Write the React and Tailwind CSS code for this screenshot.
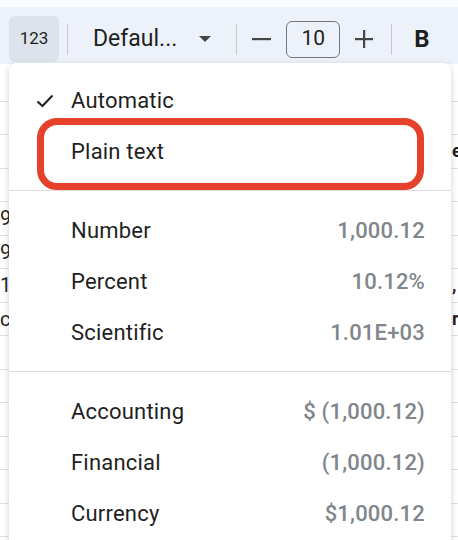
import React from 'react';

const font = { fontFamily: 'Roboto, "Noto Sans", sans-serif' };

const groups = [
  [
    { label: 'Automatic', checked: true },
    { label: 'Plain text', marked: true },
  ],
  [
    { label: 'Number', value: '1,000.12' },
    { label: 'Percent', value: '10.12%' },
    { label: 'Scientific', value: '1.01E+03' },
  ],
  [
    { label: 'Accounting', value: '$ (1,000.12)' },
    { label: 'Financial', value: '(1,000.12)' },
    { label: 'Currency', value: '$1,000.12' },
  ],
];

// sheet rows peeking out on both sides of the menu
const rows = [
  { left: '', right: '' },
  { left: '', right: '' },
  { left: '', right: 'e' },
  { left: '', right: '' },
  { left: '9', right: '' },
  { left: '9', right: '' },
  { left: '1', right: ',' },
  { left: 'c', right: 'r' },
  { left: '', right: '' },
  { left: '', right: '' },
  { left: '', right: '' },
  { left: '', right: '' },
  { left: '', right: '' },
  { left: '', right: '' },
];

const Sep = ({ className }) => <div className={`w-px h-[31px] bg-[#c7c7c7] ${className}`} />;

const Check = () => (
  <svg width="18" height="14" viewBox="0 0 18 14" fill="none">
    <path d="M1.5 7.5 L6.5 12 L16.5 1.5" stroke="#1f1f1f" strokeWidth="2" />
  </svg>
);

const MenuItem = ({ item }) => (
  <div className="relative h-[51px] flex items-center pl-[27px] pr-[26px]">
    <div className="w-[35px] flex items-center">{item.checked ? <Check /> : null}</div>
    <span className="text-[22px] text-[#1f1f1f] tracking-[0.2px]">{item.label}</span>
    {item.value ? (
      <span className="ml-auto text-[22px] font-medium text-[#80868b] tracking-[0.2px]">{item.value}</span>
    ) : null}
    {item.marked ? (
      <div className="absolute left-[28px] right-[27px] top-[-8px] bottom-[-13px] border-[7px] border-[#e5412b] rounded-[20px]" />
    ) : null}
  </div>
);

const App = () => {
  return (
    <div className="relative w-[458px] h-[540px] overflow-hidden bg-white" style={font}>
      <div className="h-[7px] bg-[#f9fbfd]" />
      <div className="h-[57px] bg-[#edf2fa] flex items-center pl-[9px] pt-[7px]">
        <div className="w-[50px] h-[46px] rounded-[6px] bg-[#dde3ea] flex items-center justify-center text-[17px] text-[#1f1f1f]">
          123
        </div>
        <Sep className="ml-[8px]" />
        <span className="ml-[25px] text-[23px] text-[#1f1f1f]">Defaul...</span>
        <svg className="ml-[22px]" width="12" height="6" viewBox="0 0 12 6">
          <path d="M0 0 L12 0 L6 6 Z" fill="#444746" />
        </svg>
        <Sep className="ml-[25px]" />
        <svg className="ml-[15px]" width="19" height="3" viewBox="0 0 19 3">
          <rect width="19" height="2.2" fill="#444746" />
        </svg>
        <div className="ml-[15px] w-[54px] h-[37px] border border-[#747775] rounded-[6px] flex items-center justify-center text-[21px] text-[#1f1f1f]">
          10
        </div>
        <svg className="ml-[15px]" width="18" height="18" viewBox="0 0 18 18">
          <rect x="0" y="8" width="18" height="2.2" fill="#444746" />
          <rect x="8" y="0" width="2.2" height="18" fill="#444746" />
        </svg>
        <Sep className="ml-[18px]" />
        <span className="ml-[22px] text-[24px] font-bold text-[#1f1f1f]">B</span>
      </div>

      <div className="flex flex-col">
        <div className="h-[4px]" />
        {rows.map((r, i) => (
          <div key={i} className="h-[33.5px] border-b border-[#e1e3e1] flex items-center justify-between">
            <span className="w-[9px] text-right text-[20px] text-[#1f1f1f] leading-none">{r.left}</span>
            <span className="w-[6px] text-[18px] font-bold text-[#1f1f1f] leading-none">{r.right}</span>
          </div>
        ))}
      </div>

      <div className="absolute top-[63px] left-[9px] w-[442px] bottom-[-10px] bg-white rounded-lg shadow-[0_2px_6px_rgba(60,64,67,0.25)] pt-[12px]">
        {groups.map((g, gi) => (
          <div key={gi}>
            {gi > 0 ? <div className="h-px bg-[#dadce0] mt-[13px] mb-[14px]" /> : null}
            {g.map((item) => (
              <MenuItem key={item.label} item={item} />
            ))}
          </div>
        ))}
      </div>
    </div>
  );
};

export default App;
